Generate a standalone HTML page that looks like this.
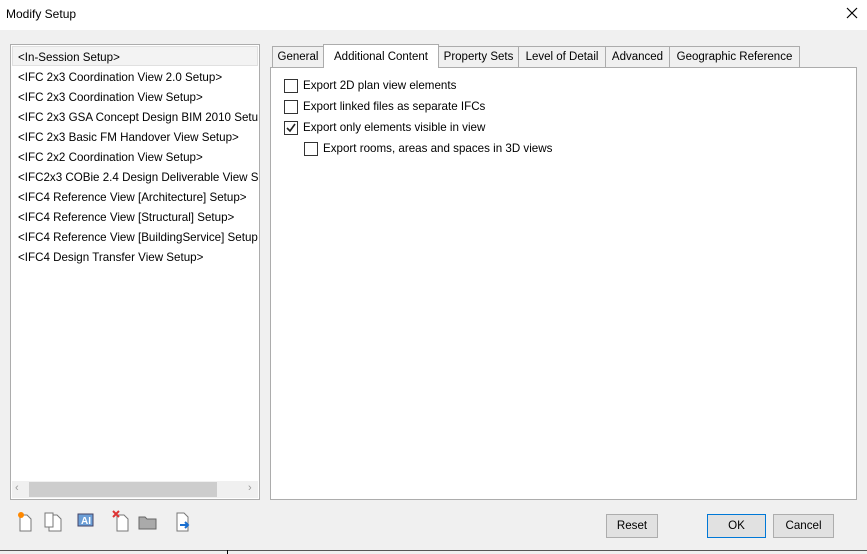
<!DOCTYPE html><html><head><style>
body{margin:0;width:867px;height:554px;background:#f0f0f0;font-family:"Liberation Sans",sans-serif;font-size:11.6px;color:#000;position:relative;overflow:hidden}
.a{position:absolute}
.title{left:0;top:0;width:867px;height:30px;background:#fff}
.list{left:10px;top:44px;width:248px;height:454px;background:#fff;border:1px solid #acacac}
.item{position:absolute;left:7px;height:20px;line-height:22px;white-space:nowrap;width:240px;overflow:hidden}
.tab{position:absolute;top:46px;height:21px;line-height:21px;border:1px solid #acacac;border-bottom:none;background:#f0f0f0;box-sizing:border-box;white-space:nowrap;text-align:center;overflow:hidden;font-size:11.5px}
.panel{left:270px;top:67px;width:585px;height:431px;background:#fff;border:1px solid #acacac}
.cb{position:absolute;width:12px;height:12px;border:1px solid #333;background:#fff}
.lb{position:absolute;white-space:nowrap}
.btn{position:absolute;top:514px;height:22px;border:1px solid #adadad;background:#e1e1e1;text-align:center;line-height:22px}
</style></head><body>
<div class="a title"></div>
<div class="a" style="left:6px;top:7px;font-size:12px">Modify Setup</div>
<svg class="a" style="left:846px;top:7px" width="12" height="12"><path d="M1 1l10 10M11 1L1 11" stroke="#000" stroke-width="1.2"/></svg>
<div class="a list">
<div class="a" style="left:1px;top:1px;width:246px;height:20px;background:#f3f3f3;border:1px solid #e0e0e0;box-sizing:border-box"></div>
<div class="item" style="top:2px">&lt;In-Session Setup&gt;</div>
<div class="item" style="top:22px">&lt;IFC 2x3 Coordination View 2.0 Setup&gt;</div>
<div class="item" style="top:42px">&lt;IFC 2x3 Coordination View Setup&gt;</div>
<div class="item" style="top:62px">&lt;IFC 2x3 GSA Concept Design BIM 2010 Setup&gt;</div>
<div class="item" style="top:82px">&lt;IFC 2x3 Basic FM Handover View Setup&gt;</div>
<div class="item" style="top:102px">&lt;IFC 2x2 Coordination View Setup&gt;</div>
<div class="item" style="top:122px">&lt;IFC2x3 COBie 2.4 Design Deliverable View Setup&gt;</div>
<div class="item" style="top:142px">&lt;IFC4 Reference View [Architecture] Setup&gt;</div>
<div class="item" style="top:162px">&lt;IFC4 Reference View [Structural] Setup&gt;</div>
<div class="item" style="top:182px">&lt;IFC4 Reference View [BuildingService] Setup&gt;</div>
<div class="item" style="top:202px">&lt;IFC4 Design Transfer View Setup&gt;</div>
<div class="a" style="left:1px;top:436px;width:246px;height:17px;background:#f0f0f0"></div>
<div class="a" style="left:18px;top:437px;width:188px;height:15px;background:#cdcdcd"></div>
<div class="a" style="left:4px;top:437px;color:#999;font-size:11px">‹</div>
<div class="a" style="left:237px;top:437px;color:#999;font-size:11px">›</div>
</div>
<div class="a panel"></div>
<div class="tab" style="left:272px;width:52px">General</div>
<div class="tab" style="left:323px;top:44px;height:24px;width:116px;background:#fff;line-height:24px;z-index:2">Additional Content</div>
<div class="tab" style="left:438px;width:81px">Property Sets</div>
<div class="tab" style="left:518px;width:88px">Level of Detail</div>
<div class="tab" style="left:605px;width:65px">Advanced</div>
<div class="tab" style="left:669px;width:131px">Geographic Reference</div>
<div class="cb" style="left:284px;top:79px"></div><div class="lb" style="left:303px;top:79px">Export 2D plan view elements</div>
<div class="cb" style="left:284px;top:100px"></div><div class="lb" style="left:303px;top:100px">Export linked files as separate IFCs</div>
<div class="cb" style="left:284px;top:121px"><svg width="12" height="12" style="display:block"><path d="M2 6l3 3 5-7" stroke="#222" stroke-width="1.6" fill="none"/></svg></div><div class="lb" style="left:303px;top:121px">Export only elements visible in view</div>
<div class="cb" style="left:304px;top:142px"></div><div class="lb" style="left:323px;top:142px">Export rooms, areas and spaces in 3D views</div>
<svg class="a" style="left:16px;top:510px" width="180" height="24">
<g fill="#fff" stroke="#777"><path d="M4 5h7l4 4v12H4z"/><path d="M33 5h8l4 4v12H33z"/><path d="M29 3h8v14h-8z"/><path d="M101 5h7l4 4v12h-11z"/><path d="M161 3h7l4 4v14h-11z"/></g>
<circle cx="5" cy="5" r="3" fill="#f80"/>
<rect x="62" y="4" width="15" height="12" fill="#6b9ed6" stroke="#446"/><text x="65" y="14" font-size="10" fill="#fff" font-family="Liberation Sans" font-weight="bold">AI</text>
<path d="M97 1l6 6M103 1l-6 6" stroke="#d33" stroke-width="2"/>
<path d="M123 7h6l2 2h9v10h-17z" fill="#aaa" stroke="#666"/>
<path d="M164 15h8M169 12l3 3-3 3" stroke="#1a6fd0" stroke-width="2" fill="none"/>
</svg>
<div class="btn" style="left:606px;width:50px">Reset</div>
<div class="btn" style="left:707px;width:57px;border-color:#0078d7">OK</div>
<div class="btn" style="left:773px;width:59px">Cancel</div>
<div class="a" style="left:0;top:550px;width:867px;height:1px;background:#555"></div>
<div class="a" style="left:227px;top:550px;width:1px;height:4px;background:#000"></div>
</body></html>
